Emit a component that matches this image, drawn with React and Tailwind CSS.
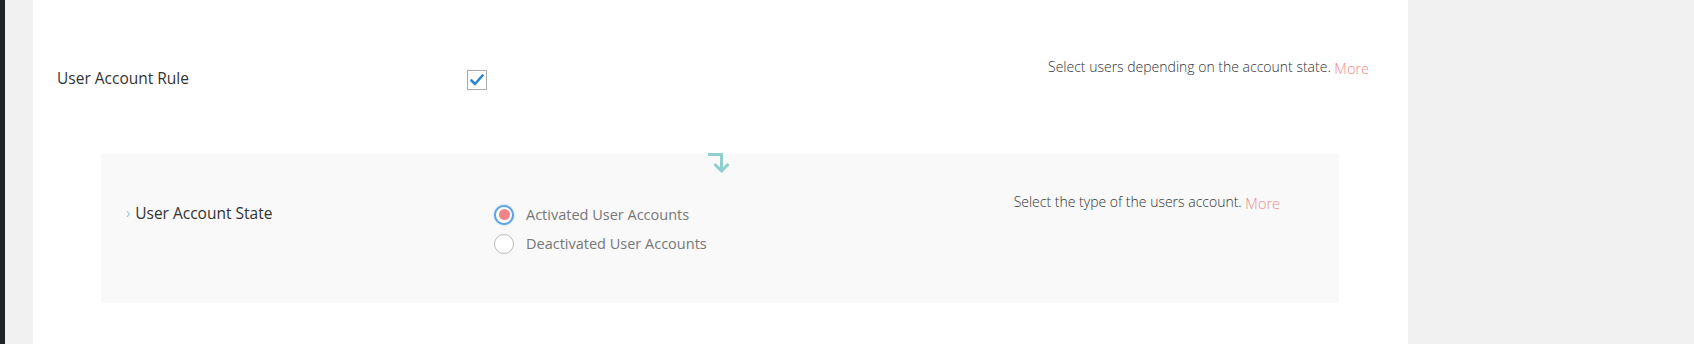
import React from "react";

function Radio({ checked, label }) {
  return (
    <div className="flex h-[29px] items-center">
      <span
        className={
          checked
            ? "flex h-[20px] w-[20px] items-center justify-center rounded-full border-2 border-[#5fa3e3] bg-white shadow-[0_0_2px_rgba(80,150,220,0.6)]"
            : "flex h-[20px] w-[20px] items-center justify-center rounded-full border border-[#bdbdbd] bg-white"
        }
      >
        {checked && <span className="h-[11px] w-[11px] rounded-full bg-[#ef8585]" />}
      </span>
      <span className="ml-[12px] text-[14.5px] leading-[20px] text-[#777]">{label}</span>
    </div>
  );
}

export default function App() {
  return (
    <div
      className="flex h-[344px] w-[1694px] bg-[#f1f1f1]"
      style={{ fontFamily: '"Open Sans", "Noto Sans", sans-serif' }}
    >
      <div className="w-[5px] bg-[#1f2428]" />
      <div className="w-[28px]" />
      <div className="w-[1375px] bg-white">
        {/* Row 1 */}
        <div className="mt-[56px] flex h-[34px] items-start">
          <div className="mt-[12px] w-[434px] pl-[24px] text-[15.5px] leading-[20px] text-[#333]">
            User Account Rule
          </div>
          <div className="mt-[14px] flex h-[20px] w-[20px] items-center justify-center border border-[#aaa] bg-white">
            <svg width="14" height="12" viewBox="0 0 14 12">
              <path d="M1.5 6.5 L5 10 L12.5 1.5" fill="none" stroke="#2b87cf" strokeWidth="2.6" strokeLinecap="round" strokeLinejoin="round" />
            </svg>
          </div>
          <div className="mt-[2px] flex-1 pr-[39px] text-right text-[14px] font-light leading-[18px] text-[#333]">
            Select users depending on the account state.{" "}
            <span className="align-[-2px] text-[14.5px] text-[#f28b8b]">More</span>
          </div>
        </div>

        {/* Sub panel */}
        <div className="relative ml-[68px] mt-[64px] flex h-[149px] w-[1238px] items-start bg-[#f9f9f9] pt-[39px]">
          <svg
            className="absolute left-[606px] top-[-2px]"
            width="26"
            height="21"
            viewBox="0 0 26 21"
          >
            <path d="M1 2.5 H14.5 V19" fill="none" stroke="#8fd0cf" strokeWidth="3" />
            <path d="M7.5 12 L14.5 19 L21.5 12" fill="none" stroke="#8fd0cf" strokeWidth="3" />
          </svg>
          <div className="mt-[10px] flex w-[393px] items-center pl-[25px] text-[15.5px] leading-[20px] text-[#333]">
            <span className="mr-[5px] text-[14px] text-[#8fd0cf]">›</span>
            User Account State
          </div>
          <div className="mt-[7px] flex flex-col">
            <Radio checked label="Activated User Accounts" />
            <Radio label="Deactivated User Accounts" />
          </div>
          <div className="flex-1 pr-[59px] text-right text-[14px] font-light leading-[18px] text-[#333]">
            Select the type of the users account.{" "}
            <span className="align-[-2px] text-[14.5px] text-[#f28b8b]">More</span>
          </div>
        </div>
      </div>
    </div>
  );
}
